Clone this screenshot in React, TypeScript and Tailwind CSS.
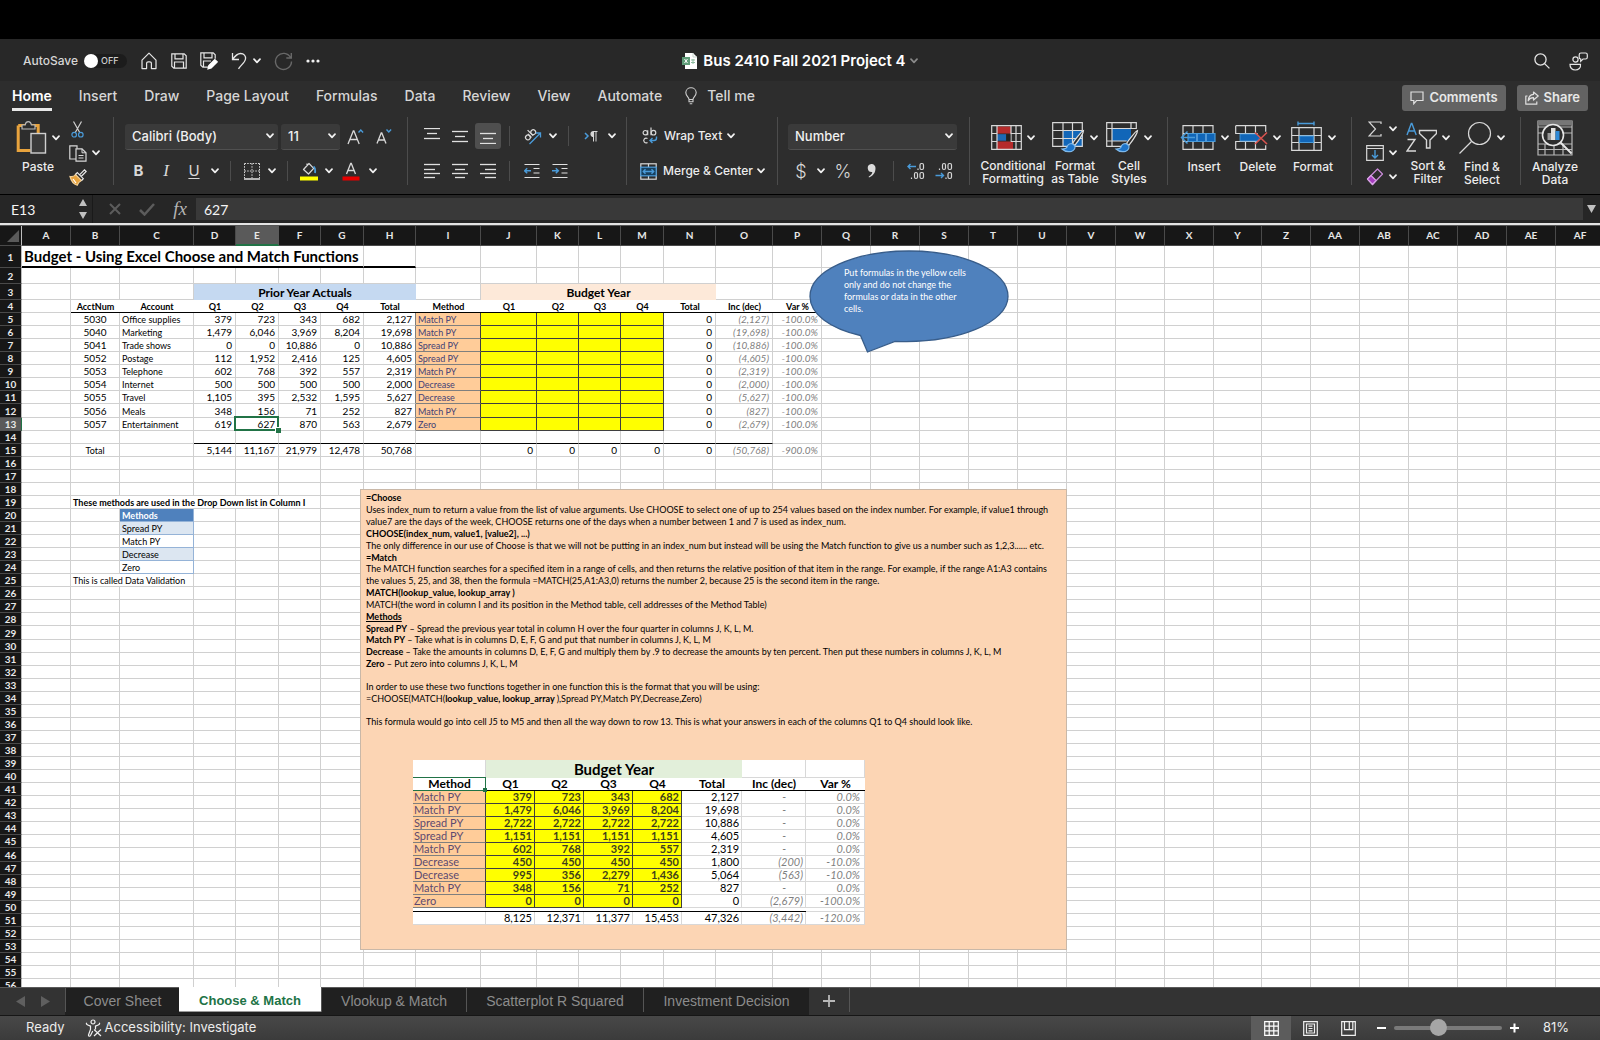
import React from "react";
import clsx from "clsx";

/* ------------------------------------------------------------------ */
/* Icons                                                                */
/* ------------------------------------------------------------------ */

type SvgProps = { w: number; h: number; children: React.ReactNode; className?: string };
const Svg = ({ w, h, children, className }: SvgProps) => (
  <svg width={w} height={h} viewBox={`0 0 ${w} ${h}`} fill="none" stroke="#d8d8d8" strokeWidth="1.2" className={clsx("shrink-0", className)} aria-hidden="true">
    {children}
  </svg>
);

const Chevron = ({ dim }: { dim?: boolean }) => (
  <Svg w={8} h={6}>
    <path d="M1 1.2 4 4.4 7 1.2" stroke={dim ? "#8a8a8a" : "#f2f2f2"} strokeWidth="1.7" strokeLinecap="round" strokeLinejoin="round" />
  </Svg>
);

const HomeIcon = () => (
  <Svg w={18} h={18}>
    <path d="M2 8.2 9 1.2l7 7V16.6h-4.6v-5.2a1.6 1.6 0 0 0-1.6-1.6H8.200a1.600 1.600 0 0 0-1.600 1.600v5.200H2Z" stroke="#e6e6e6" strokeLinejoin="round" />
  </Svg>
);
const SaveIcon = () => (
  <Svg w={16} h={16}>
    <path d="M.8.8h12.400l2 2v12.400H2.800l-2-2ZM4 .8v5h8v-5M3.500 15.200V9h9v6.200" stroke="#e6e6e6" />
  </Svg>
);
const SaveAsIcon = () => (
  <Svg w={18} h={18}>
    <path d="M8 15.200H2.800l-2-2V.8h12.400l2 2v4M4 .8v5h8v-5M3.500 15.200V9H11" stroke="#e6e6e6" />
    <path d="m8 16.800.8-3.300 6-6 2.400 2.400-6 6Z" fill="#fff" stroke="#fff" />
  </Svg>
);
const UndoIcon = () => (
  <Svg w={16} h={18}>
    <path d="M1.500 1v6.500H8M1.500 7.500C4 4 6.500 1.500 9.500 1.500c3.500 0 5.500 2.500 5 5.500-.5 3.500-4.500 6-7 9.800" stroke="#e6e6e6" strokeWidth="1.300" />
  </Svg>
);
const RedoIcon = () => (
  <Svg w={19} h={19}>
    <path d="M16.500 5.500A8 8 0 1 0 17.500 9.500M17.300 1v5h-5" stroke="#686868" strokeWidth="1.400" />
  </Svg>
);
const DotsIcon = () => (
  <Svg w={14} h={4}>
    <g fill="#f0f0f0" stroke="none">
      <circle cx="2" cy="2" r="1.600" />
      <circle cx="7" cy="2" r="1.600" />
      <circle cx="12" cy="2" r="1.600" />
    </g>
  </Svg>
);
const FileIcon = () => (
  <Svg w={15} h={16}>
    <path d="M3 0h8l4 4v12H3Z" fill="#fff" stroke="none" />
    <path d="M11 0v4h4" stroke="#c9d8cf" strokeWidth="1" />
    <path d="M9 7h4M9 9.500h4M11 6v5" stroke="#8dbb9f" strokeWidth="1" />
    <rect x="0" y="4" width="8" height="8" fill="#5f9c78" stroke="none" />
    <path d="m2.500 6 3 4M5.500 6l-3 4" stroke="#fff" strokeWidth="1" />
  </Svg>
);
const SearchIcon = () => (
  <Svg w={16} h={16}>
    <circle cx="6.500" cy="6.500" r="5.600" stroke="#e6e6e6" strokeWidth="1.300" />
    <path d="m10.600 10.600 4.800 4.800" stroke="#e6e6e6" strokeWidth="1.300" />
  </Svg>
);
const PresenceIcon = () => (
  <Svg w={19} h={19}>
    <circle cx="6.500" cy="7.500" r="2.600" stroke="#e6e6e6" />
    <path d="M1 12.300h10.500c.5 3.500-2 5.700-5.200 5.700S.8 15.800 1 12.300Z" stroke="#e6e6e6" />
    <path d="M12 1h4.500a1.800 1.800 0 0 1 1.800 1.800v2.400A1.800 1.800 0 0 1 16.500 7H14l-2.300 2.300V7a1.800 1.800 0 0 1-1.500-1.800V2.800A1.800 1.800 0 0 1 12 1Z" stroke="#e6e6e6" />
  </Svg>
);
const BulbIcon = () => (
  <Svg w={12} h={18}>
    <path d="M4 12.500c0-2.200-3.200-3.300-3.200-7A5.100 5.100 0 0 1 6 .8a5.100 5.100 0 0 1 5.200 4.700c0 3.700-3.200 4.800-3.200 7ZM4 12.500v2.200h4v-2.200M4.700 16.800h2.600" stroke="#cfcfcf" strokeWidth="1.100" />
  </Svg>
);
const CommentIcon = () => (
  <Svg w={14} h={14}>
    <path d="M1 1h12v8.500H6.500L3.800 12.700V9.500H1Z" stroke="#e0e0e0" />
  </Svg>
);
const ShareIcon = () => (
  <Svg w={14} h={14}>
    <path d="M2.500 5H.8v8.200h11V10.500M8.500 1l4.700 4-4.700 4V6.700C6 6.600 4.500 7.500 3.200 9.800 3.400 6 5 3.700 8.500 3.400Z" stroke="#e0e0e0" strokeLinejoin="round" />
  </Svg>
);
const PasteIcon = () => (
  <Svg w={31} h={34}>
    <path d="M2.200 4.500h20v9.500M14.500 29.500H2.200V4.500" stroke="#e8a33d" strokeWidth="3" />
    <path d="M6 8V4h3.200c.5-4.400 5.600-4.400 6.200 0H19v4Z" fill="#2d2d2d" stroke="#b9b9b9" />
    <rect x="15" y="12.500" width="14.500" height="19.500" fill="#3a3a3a" stroke="#cfcfcf" strokeWidth="1.400" />
  </Svg>
);
const CutIcon = () => (
  <Svg w={13} h={17}>
    <path d="M2.500.5 9 12M10.500.5 4 12" stroke="#d0d0d0" />
    <circle cx="3.200" cy="13.700" r="2.300" stroke="#4a9bd9" />
    <circle cx="9.800" cy="13.700" r="2.300" stroke="#4a9bd9" />
  </Svg>
);
const CopyIcon = () => (
  <Svg w={18} h={17}>
    <path d="M7 14H.8V.8H8v3" />
    <path d="M7 3.800h6l4 4v8.400H7Z" fill="#2d2d2d" />
    <path d="M13 3.800v4h4M9.500 10.500h5M9.500 13h5" strokeWidth="1" />
  </Svg>
);
const BrushIcon = () => (
  <Svg w={18} h={17}>
    <path d="M1 7.500c3 .5 4.500-.5 5.500-2l6 6c-2 1-3.500 2.500-4.300 4.700C4.500 15 2 11.500 1 7.500Z" fill="#e8a33d" stroke="#f2cf96" />
    <path d="m6.500 5.500 1.800-1.800 6 6-1.800 1.800M10.500 5.800l5-5 1.700 1.700-5 5" stroke="#e8e8e8" />
    <path d="m4 10 3 4" stroke="#fff" />
  </Svg>
);
const GrowFont = () => (
  <Svg w={17} h={17}>
    <path d="M1 16 6.300 3h.6L12.200 16M3 11.500h7.200" strokeWidth="1.300" />
    <path d="m11.500 4.500 2.300-2.500 2.300 2.500" stroke="#4a9bd9" strokeWidth="1.400" />
  </Svg>
);
const ShrinkFont = () => (
  <Svg w={17} h={17}>
    <path d="M1 15.500 5.200 5h.6L10 15.500M2.700 12h5.600" strokeWidth="1.300" />
    <path d="m10.500 1.500 2.300 2.500 2.300-2.500" stroke="#4a9bd9" strokeWidth="1.400" />
  </Svg>
);
const BordersIcon = () => (
  <Svg w={16} h={17}>
    <path d="M.5.500h15M.5 8h15M.5.500V15M8 .5V15M15.500.500V15" strokeDasharray="1.500 1.200" strokeWidth="1" />
    <path d="M0 16h16" strokeWidth="1.600" />
  </Svg>
);
const FillIcon = () => (
  <Svg w={18} h={19}>
    <path d="M9 1.500 3.500 7.500l5 4.500 5.200-5.700ZM7 4V1.500" strokeLinejoin="round" />
    <path d="M13.500 4.500c1.500 1 2 3 1.500 6.500" stroke="#4a9bd9" strokeWidth="1.800" />
    <path d="M0 16.500h18" stroke="#ffff00" strokeWidth="4" />
  </Svg>
);
const FontColorIcon = () => (
  <Svg w={18} h={19}>
    <path d="M4.500 12 8.700 1.500h.6L13.500 12M6.200 8.500h5.600" strokeWidth="1.300" />
    <path d="M.500 16.500h17" stroke="#e60000" strokeWidth="4" />
  </Svg>
);

const Lines = ({ rows }: { rows: [number, number, number][] }) => (
  <Svg w={16} h={16}>
    {rows.map(([y, x1, x2]) => (
      <path key={y} d={`M${x1} ${y}.5H${x2}`} stroke="#e0e0e0" strokeWidth="1.300" />
    ))}
  </Svg>
);
const OrientIcon = () => (
  <Svg w={19} h={17}>
    <g transform="rotate(-45 6 7)">
      <circle cx="3.500" cy="8" r="2.400" />
      <path d="M6 5.500v5M8.500 2.500v8" />
      <circle cx="11" cy="8" r="2.400" />
    </g>
    <path d="m6.500 16 11-11M13 5h4.500v4.500" stroke="#4a9bd9" strokeWidth="1.300" />
  </Svg>
);
const ParaIcon = () => (
  <Svg w={14} h={12}>
    <path d="m1 3 3 3-3 3" stroke="#4a9bd9" strokeWidth="1.500" />
    <path d="M9.500 11.500V1.500M12 11.500V1.500M13.500 1.500H9" strokeWidth="1" />
    <path d="M9.500 1.500a2.500 2.500 0 0 0 0 5Z" fill="#d8d8d8" />
  </Svg>
);
const IndentIcon = ({ right }: { right?: boolean }) => (
  <Svg w={16} h={16}>
    <path d="M.500 1.500H15.500M9.500 5.500h6M9.500 10h6M.500 14.500H15.500" stroke="#e0e0e0" />
    {right ? <path d="M0 7.800h6M3.800 5.300l2.500 2.500-2.500 2.500" stroke="#4a9bd9" strokeWidth="1.500" /> : <path d="M7 7.800H1M3.200 5.300.7 7.800l2.500 2.500" stroke="#4a9bd9" strokeWidth="1.500" />}
  </Svg>
);
const WrapIcon = () => (
  <Svg w={16} h={18}>
    <circle cx="3.300" cy="5.700" r="2.200" />
    <path d="M5.700 3.200v5M9 .500v7.700M5.500 11.500a2.400 2.400 0 1 0 0 4" />
    <circle cx="11.500" cy="5.700" r="2.300" />
    <path d="M14.500 9.500v1.500a2.500 2.500 0 0 1-2.500 2.500H8M10.500 11 8 13.500l2.500 2.500" stroke="#4a9bd9" strokeWidth="1.400" />
  </Svg>
);
const MergeIcon = () => (
  <Svg w={17} h={17}>
    <rect x=".8" y=".8" width="15.400" height="15.400" />
    <path d="M8.500.800v3.500M8.500 12.700v3.500" />
    <rect x=".8" y="4.200" width="15.400" height="8.600" fill="#17405f" stroke="#4a9bd9" />
    <path d="M3.500 8.500h10M5.500 6.300 3.300 8.500l2.200 2.200M11.500 6.300l2.200 2.200-2.200 2.200" stroke="#4a9bd9" strokeWidth="1.400" />
  </Svg>
);
const CommaIcon = () => (
  <Svg w={9} h={14}>
    <path d="M4.300 0a4 4 0 0 1 4.200 4.200c0 4.300-2.300 7.600-6.500 9.300l-.4-.8C4 11.300 5.200 9.700 5.300 8A4 4 0 1 1 4.300 0Z" fill="#dcdcdc" stroke="none" />
  </Svg>
);
const Decimals = ({ less }: { less?: boolean }) => (
  <Svg w={18} h={18}>
    {less ? (
      <>
        <rect x="7.500" y="1.500" width="3" height="6" rx="1.500" />
        <rect x="13" y="1.500" width="3.500" height="6" rx="1.500" />
        <path d="M4.500 6.500v1.500M11 15.500V17" />
        <rect x="13" y="10.500" width="3.500" height="6" rx="1.500" />
        <path d="M.500 13.500h8M6 11l2.500 2.500L6 16" stroke="#4a9bd9" strokeWidth="1.400" />
      </>
    ) : (
      <>
        <rect x="13" y="1.500" width="3.500" height="6" rx="1.500" />
        <path d="M11 6.500v1.500M4.500 15.500V17" />
        <rect x="7.500" y="10.500" width="3" height="6" rx="1.500" />
        <rect x="13" y="10.500" width="3.500" height="6" rx="1.500" />
        <path d="M9 4.500H1M3.500 2 1 4.500 3.500 7" stroke="#4a9bd9" strokeWidth="1.400" />
      </>
    )}
  </Svg>
);

const CondIcon = () => (
  <Svg w={31} h={26}>
    <path d="M6 1.500h14v7H6ZM6 16.500h16v7.500H6Z" fill="#b52b2b" stroke="none" />
    <path d="M6 9.200h9v6.500H6Z" fill="#1d69b4" stroke="none" />
    <path d="M.7.700h29.600v23.600H.7ZM.7 8.500H6M20 8.500h10.300M.7 16.500H6M20 16.500h10.300M6 .700v23.600M20 .700v15.800M25 .700v23.600" />
    <path d="M15.500 9.200h4v6.500h-4Z" fill="#222" stroke="none" />
  </Svg>
);
const PaintBrush = () => (
  <>
    <path d="M31.500 8.500c-1.500.3-9 9.500-11 13l2.300 1.800C25.500 20 31.500 11.500 31.500 8.500Z" fill="#2d2d2d" stroke="#e0e0e0" />
    <path d="M20 21.500c-3 0-4.500 1.500-5 3.500-.5 1.300-2 2-5 2 2.500 2.500 6 3 9.500 2.300 2.800-.8 4-3.300 3.200-5.800Z" fill="#1d74c9" stroke="#7db8ea" />
  </>
);
const TableIcon = () => (
  <Svg w={33} h={31}>
    <path d="M11 8.500h20v16H11Z" fill="#1166b8" stroke="none" />
    <path d="M.7.700h29.600v23.600H.7ZM.7 8.500h29.600M.7 16.500h29.600M11 .700v23.600M20.500 .700v23.600" />
    <PaintBrush />
  </Svg>
);
const StylesIcon = () => (
  <Svg w={33} h={31}>
    <path d="M6 6.500h19v12.500H6Z" fill="#1166b8" stroke="none" />
    <path d="M.7.700h29.600v5.800H.7ZM.7 6.500v17.800h20M6 .700v23.600M.7 19h20M25 .700v5.800" />
    <PaintBrush />
  </Svg>
);
const InsertIcon = () => (
  <Svg w={36} h={26}>
    <path d="M3 .700h30v23.600H3ZM3 8.500h30M3 16.500h30M13 .700v23.600M23 .700v23.600" />
    <path d="M8 8.500h27v8H8Z" fill="#1166b8" stroke="#4a9bd9" />
    <path d="M15 12.500H1.500M7.500 6.500l-6 6 6 6" stroke="#4a9bd9" strokeWidth="1.500" />
    <path d="M17 9v7M26 9v7" stroke="#7db8ea" />
  </Svg>
);
const DeleteIcon = () => (
  <Svg w={33} h={26}>
    <path d="M.7.700h30v6M.7.700v7.800h22M.7 24.300V16.500h22M.7 24.300h30v-4M10.500.700v7.800M20.500.700v7.800M10.500 16.500v7.800M20.500 16.500v7.800" />
    <path d="M5 9h17l3 3.500-3 3.500H5Z" fill="#1166b8" stroke="#4a9bd9" strokeWidth=".8" />
    <path d="m20 7.500 12 11.500M32 7.500 20 19" stroke="#d9534f" strokeWidth="1.600" />
  </Svg>
);
const FormatIcon = () => (
  <Svg w={32} h={36}>
    <path d="M7 3.500h16M7 1.500v4M23 1.500v4" stroke="#4a9bd9" strokeWidth="1.400" />
    <path d="M.7 7.700h29.600v22.600H.7ZM.7 15.500h29.600M.7 22.500h29.600M8 7.700v22.600M23 7.700v22.600" />
    <path d="M8.500 16h14v6.500h-14Z" fill="#1166b8" stroke="#4a9bd9" />
  </Svg>
);
const SigmaIcon = () => (
  <Svg w={14} h={16}>
    <path d="M13 3V1H1l6.500 7L1 15h12v-2" />
  </Svg>
);
const FillDownIcon = () => (
  <Svg w={18} h={16}>
    <path d="M.7.700h16.600v14.600H.7ZM.7 3.500h16.600" />
    <path d="M9 5v8M6 10l3 3 3-3" stroke="#4a9bd9" strokeWidth="1.400" />
  </Svg>
);
const EraserIcon = () => (
  <Svg w={18} h={18}>
    <path d="M1.500 11 11.500 1l5 5-10 10.500Z" stroke="#c98bd9" strokeLinejoin="round" />
    <path d="m1.500 11 3.500-3.500 5 5-3.500 4Z" fill="#a63cc0" stroke="#d9a5e5" strokeLinejoin="round" />
  </Svg>
);
const SortIcon = () => (
  <Svg w={31} h={32}>
    <path d="M1 13 5.300 1.500h.6L10.200 13M2.500 9h6.500" stroke="#4a9bd9" strokeWidth="1.400" />
    <path d="M1.500 17.500H9L1 29h9" strokeWidth="1.400" />
    <path d="M13.500 8.500h17v3L24 18v8h-3.500v-8l-7-6.500Z" strokeWidth="1.400" />
  </Svg>
);
const FindIcon = () => (
  <Svg w={33} h={34}>
    <circle cx="20.500" cy="12.500" r="11" />
    <path d="m12.500 20.500-12 12" />
  </Svg>
);
const AnalyzeIcon = () => (
  <Svg w={36} h={36}>
    <path d="M1 1h34v34H1ZM1 7h34M1 13h34M1 24h34M1 29.500h34M8 24v11M17 24v11M26 24v11" stroke="#b8b8b8" />
    <rect x="1" y="1" width="34" height="4.500" fill="#777" stroke="none" />
    <circle cx="16" cy="15" r="10.500" fill="#2d2d2d" stroke="#e6e6e6" strokeWidth="1.600" />
    <path d="m23.500 22.500 11 11" stroke="#e6e6e6" strokeWidth="2" />
    <path d="M10.500 13h4v7h-4Z" fill="#999" stroke="none" />
    <path d="M14 8h4.500v12H14Z" fill="#e0e0e0" stroke="none" />
    <path d="M18.500 11h4v9h-4Z" fill="#2f8ad8" stroke="none" />
  </Svg>
);
const AccessIcon = () => (
  <Svg w={17} h={18}>
    <circle cx="8" cy="3" r="2" stroke="#f0f0f0" />
    <path d="M1.500 4.200c-.8 1.500 2.500 2.300 4 2.800v3.500L3.500 16c-.2 1.200 1.300 1.700 2 .5l2-4M14.500 4.200c.8 1.500-2.500 2.300-4 2.800v3" stroke="#f0f0f0" strokeLinecap="round" />
    <path d="m9 10.500 7 6.500M16 10.500 9 17" stroke="#f0f0f0" />
  </Svg>
);

/* ------------------------------------------------------------------ */
/* Ribbon                                                               */
/* ------------------------------------------------------------------ */

const IconBtn = ({ label, className, children }: { label: string; className?: string; children: React.ReactNode }) => (
  <button type="button" aria-label={label} className={clsx("flex h-[26px] shrink-0 items-center justify-center", className)}>
    {children}
  </button>
);
const Drop = ({ label }: { label: string }) => (
  <IconBtn label={label} className="w-[14px]">
    <Chevron />
  </IconBtn>
);
const Sep = () => <span className="mx-2 h-5 w-px shrink-0 bg-[#4c4c4c]" />;

const Group = ({ className, children }: { className?: string; children: React.ReactNode }) => (
  <div className={clsx("h-[68px] shrink-0 border-r border-[#4c4c4c]", className)}>{children}</div>
);

const BigBtn = ({ icon, lines, className, noDrop }: { icon: React.ReactNode; lines: string[]; className?: string; noDrop?: boolean }) => (
  <button type="button" className={clsx("flex shrink-0 flex-col items-center pt-1 text-[12px] leading-[13px] font-medium text-[#ececec]", className)}>
    <span className="flex h-[34px] items-center gap-[5px]">
      {icon}
      {!noDrop && <Chevron />}
    </span>
    <span className="mt-[5px] whitespace-nowrap">
      {lines.map((l) => (
        <span key={l} className="block">
          {l}
        </span>
      ))}
    </span>
  </button>
);

const Select = ({ label, value, className }: { label: string; value: string; className?: string }) => (
  <div className={clsx("relative h-[26px] shrink-0", className)}>
    <select aria-label={label} defaultValue={value} className="h-full w-full appearance-none rounded-[3px] border-b border-[#505050] bg-[#3a3a3a] pl-[7px] text-[13px] font-medium text-[#f0f0f0]">
      <option>{value}</option>
    </select>
    <span className="pointer-events-none absolute inset-y-0 right-1 flex items-center">
      <Chevron />
    </span>
  </div>
);

const tabs = ["Home", "Insert", "Draw", "Page Layout", "Formulas", "Data", "Review", "View", "Automate"];

function TitleBar() {
  return (
    <header className="grid h-[42px] shrink-0 grid-cols-[1fr_auto_1fr] items-center bg-[#282828] pt-[2px]">
      <div className="flex items-center pl-[23px]">
        <label htmlFor="autosave" className="text-[12px] font-medium text-[#d6d6d6]">
          AutoSave
        </label>
        <span className="relative ml-[6px] flex h-[14px] w-[43px] items-center rounded-full bg-[#1c1c1c]">
          <input id="autosave" type="checkbox" className="h-[14px] w-[14px] appearance-none rounded-full bg-white" />
          <span className="ml-[3px] text-[9px] font-medium text-[#d0d0d0]">OFF</span>
        </span>
        <div className="ml-[13px] flex items-center gap-[13px]">
          <button type="button" aria-label="Home"><HomeIcon /></button>
          <button type="button" aria-label="Save"><SaveIcon /></button>
          <button type="button" aria-label="Save as"><SaveAsIcon /></button>
          <button type="button" aria-label="Undo" className="flex items-center gap-[6px]"><UndoIcon /><Chevron /></button>
          <button type="button" aria-label="Redo"><RedoIcon /></button>
          <button type="button" aria-label="More"><DotsIcon /></button>
        </div>
      </div>
      <button type="button" className="flex items-center text-[15px] font-semibold text-white">
        <FileIcon />
        <span className="mr-1 ml-[6px]">Bus 2410 Fall 2021 Project 4</span>
        <Chevron dim />
      </button>
      <div className="flex items-center justify-end gap-[19px] pr-3">
        <button type="button" aria-label="Search"><SearchIcon /></button>
        <button type="button" aria-label="Presence"><PresenceIcon /></button>
      </div>
    </header>
  );
}

function TabBar() {
  return (
    <nav className="flex h-[30px] shrink-0 items-start bg-[#2d2d2d] pr-3 pl-3">
      <div className="flex gap-[27px] pt-[5px] text-[14px] leading-5 font-medium text-[#d6d6d6]">
        {tabs.map((t) => (
          <button key={t} type="button" className={clsx("h-[25px] whitespace-nowrap", t === "Home" ? "border-b-3 border-[#e8e8e8] pb-[2px] font-semibold text-white" : "pb-[5px]")}>
            {t}
          </button>
        ))}
        <button type="button" className="flex h-5 items-center gap-[10px] -ml-1 whitespace-nowrap">
          <BulbIcon />
          Tell me
        </button>
      </div>
      <div className="ml-auto flex gap-[11px] pt-1 text-[13px] font-semibold text-[#e8e8e8]">
        <button type="button" className="flex h-[26px] items-center gap-[5px] rounded-[3px] bg-[#636363] px-2">
          <CommentIcon />
          Comments
        </button>
        <button type="button" className="flex h-[26px] items-center gap-[5px] rounded-[3px] bg-[#636363] px-2">
          <ShareIcon />
          Share
        </button>
      </div>
    </nav>
  );
}

function Ribbon() {
  return (
    <div className="flex h-[84px] shrink-0 overflow-hidden border-b border-black bg-[#2d2d2d] pt-[6px] font-medium">
      <Group className="flex w-[114px] pl-[15px]">
        <BigBtn icon={<PasteIcon />} lines={["Paste"]} className="w-[46px]" />
        <div className="ml-2 flex flex-col items-start gap-[2px] pt-[1px]">
          <IconBtn label="Cut" className="ml-[2px] h-[22px]!"><CutIcon /></IconBtn>
          <IconBtn label="Copy" className="h-[22px]! gap-[5px]"><CopyIcon /><Chevron /></IconBtn>
          <IconBtn label="Format painter" className="h-[22px]!"><BrushIcon /></IconBtn>
        </div>
      </Group>

      <Group className="w-[294px] pt-[6px] pl-[11px]">
        <div className="flex">
          <Select label="Font" value="Calibri (Body)" className="w-[153px]" />
          <Select label="Font size" value="11" className="ml-[3px] w-[59px]" />
          <IconBtn label="Increase font size" className="ml-[2px] w-[27px]"><GrowFont /></IconBtn>
          <IconBtn label="Decrease font size" className="w-[30px]"><ShrinkFont /></IconBtn>
        </div>
        <div className="mt-[9px] flex items-center text-[15px] text-[#d8d8d8]">
          <IconBtn label="Bold" className="w-[27px] font-bold">B</IconBtn>
          <IconBtn label="Italic" className="w-[28px] font-['Liberation_Serif'] text-[17px] italic">I</IconBtn>
          <IconBtn label="Underline" className="w-[28px] font-normal underline underline-offset-2">U</IconBtn>
          <Drop label="Underline options" />
          <Sep />
          <IconBtn label="Borders" className="w-[26px]"><BordersIcon /></IconBtn>
          <Drop label="Border options" />
          <Sep />
          <IconBtn label="Fill color" className="w-[26px]"><FillIcon /></IconBtn>
          <Drop label="Fill color options" />
          <IconBtn label="Font color" className="w-[30px]"><FontColorIcon /></IconBtn>
          <Drop label="Font color options" />
        </div>
      </Group>

      <Group className="w-[219px] pt-[6px] pl-[11px]">
        <div className="flex items-center">
          <IconBtn label="Align top" className="w-[26px]"><Lines rows={[[0, 0, 16], [5, 3, 13], [10, 0, 16]]} /></IconBtn>
          <IconBtn label="Align middle" className="ml-[2px] w-[26px]"><Lines rows={[[3, 0, 16], [8, 3, 13], [13, 0, 16]]} /></IconBtn>
          <IconBtn label="Align bottom" className="ml-[2px] w-[26px] rounded-[3px] bg-[#4f4f4f]"><Lines rows={[[5, 0, 16], [10, 3, 13], [15, 0, 16]]} /></IconBtn>
          <Sep />
          <IconBtn label="Orientation" className="w-[28px]"><OrientIcon /></IconBtn>
          <Drop label="Orientation options" />
          <Sep />
          <IconBtn label="Text direction" className="w-[28px]"><ParaIcon /></IconBtn>
          <Drop label="Text direction options" />
        </div>
        <div className="mt-[9px] flex items-center">
          <IconBtn label="Align left" className="w-[26px]"><Lines rows={[[1, 0, 16], [6, 0, 11], [10, 0, 16], [14, 0, 11]]} /></IconBtn>
          <IconBtn label="Align center" className="ml-[2px] w-[26px]"><Lines rows={[[1, 0, 16], [6, 3, 13], [10, 0, 16], [14, 3, 13]]} /></IconBtn>
          <IconBtn label="Align right" className="ml-[2px] w-[26px]"><Lines rows={[[1, 0, 16], [6, 5, 16], [10, 0, 16], [14, 5, 16]]} /></IconBtn>
          <Sep />
          <IconBtn label="Decrease indent" className="w-[28px]"><IndentIcon /></IconBtn>
          <IconBtn label="Increase indent" className="w-[28px]"><IndentIcon right /></IconBtn>
        </div>
      </Group>

      <Group className="w-[151px] pt-[6px] pl-[13px] text-[12px] text-[#ececec]">
        <button type="button" className="flex h-[26px] items-center pl-[2px] whitespace-nowrap">
          <WrapIcon />
          <span className="mr-[5px] ml-[6px]">Wrap Text</span>
          <Chevron />
        </button>
        <button type="button" className="mt-[9px] flex h-[26px] items-center whitespace-nowrap">
          <MergeIcon />
          <span className="mr-1 ml-[6px]">Merge &amp; Center</span>
          <Chevron />
        </button>
      </Group>

      <Group className="w-[192px] pt-[6px] pl-[10px]">
        <Select label="Number format" value="Number" className="w-[169px]" />
        <div className="mt-[9px] flex items-center text-[#d8d8d8]">
          <IconBtn label="Currency" className="w-[26px] text-[18px] font-light">$</IconBtn>
          <Drop label="Currency options" />
          <IconBtn label="Percent" className="w-[30px] text-[18px] font-light">%</IconBtn>
          <IconBtn label="Comma style" className="w-[27px]"><CommaIcon /></IconBtn>
          <Sep />
          <IconBtn label="Increase decimal" className="w-[27px]"><Decimals /></IconBtn>
          <IconBtn label="Decrease decimal" className="w-[29px]"><Decimals less /></IconBtn>
        </div>
      </Group>

      <Group className="flex w-[198px] pl-[10px]">
        <BigBtn icon={<CondIcon />} lines={["Conditional", "Formatting"]} className="w-[66px]" />
        <BigBtn icon={<TableIcon />} lines={["Format", "as Table"]} className="w-[58px]" />
        <BigBtn icon={<StylesIcon />} lines={["Cell", "Styles"]} className="w-[50px]" />
      </Group>

      <Group className="flex w-[184px] pl-[9px]">
        <BigBtn icon={<InsertIcon />} lines={["Insert"]} className="w-[54px]" />
        <BigBtn icon={<DeleteIcon />} lines={["Delete"]} className="w-[54px]" />
        <BigBtn icon={<FormatIcon />} lines={["Format"]} className="w-[56px]" />
      </Group>

      <Group className="flex w-[169px] pl-[14px]">
        <div className="flex flex-col gap-[2px] pt-[1px]">
          <IconBtn label="AutoSum" className="h-[22px]! justify-start! gap-[7px] pl-[2px]"><SigmaIcon /><Chevron /></IconBtn>
          <IconBtn label="Fill" className="h-[22px]! justify-start! gap-[5px]"><FillDownIcon /><Chevron /></IconBtn>
          <IconBtn label="Clear" className="h-[22px]! justify-start! gap-[5px]"><EraserIcon /><Chevron /></IconBtn>
        </div>
        <BigBtn icon={<SortIcon />} lines={["Sort &", "Filter"]} className="ml-1 w-[54px]" />
        <BigBtn icon={<FindIcon />} lines={["Find &", "Select"]} className="w-[54px]" />
      </Group>

      <div className="flex flex-1 pl-[7px]">
        <BigBtn icon={<AnalyzeIcon />} lines={["Analyze", "Data"]} className="w-[54px]" noDrop />
      </div>
    </div>
  );
}

function FormulaBar() {
  return (
    <div className="flex h-[28px] shrink-0 items-center bg-[#262626] font-['Lato',sans-serif] text-[14px] text-[#f4f4f4]">
      <input aria-label="Name box" defaultValue="E13" className="w-[68px] bg-transparent pl-[11px] outline-none" />
      <Svg w={10} h={22} className="ml-[10px]">
        <path d="M5 1 9 8H1ZM5 21 1 14h8Z" fill="#c0c0c0" stroke="none" />
      </Svg>
      <span className="ml-1 h-full w-px bg-[#1a1a1a]" />
      <button type="button" aria-label="Cancel" className="ml-4">
        <Svg w={12} h={12}><path d="m1 1 10 10M11 1 1 11" stroke="#5c5c5c" strokeWidth="2" /></Svg>
      </button>
      <button type="button" aria-label="Enter" className="ml-[18px]">
        <Svg w={16} h={13}><path d="m1 7 4.500 4.500L15 1" stroke="#5c5c5c" strokeWidth="2.500" /></Svg>
      </button>
      <button type="button" aria-label="Insert function" className="ml-4 w-[18px] font-['Liberation_Serif'] text-[19px] leading-5 text-[#b4b4b4] italic">fx</button>
      <input aria-label="Formula" defaultValue="627" className="ml-[7px] h-[22px] min-w-0 flex-1 bg-[#393939] pl-2 outline-none" />
      <button type="button" aria-label="Expand formula bar" className="mr-1 ml-1">
        <Svg w={9} h={8}><path d="M0 0h9L4.500 8Z" fill="#c0c0c0" stroke="none" /></Svg>
      </button>
    </div>
  );
}

/* ------------------------------------------------------------------ */
/* Worksheet                                                            */
/* ------------------------------------------------------------------ */

const columns: [string, number][] = [
  ["A", 49], ["B", 49], ["C", 74], ["D", 42], ["E", 43], ["F", 42], ["G", 43], ["H", 52], ["I", 65], ["J", 56],
  ["K", 42], ["L", 42], ["M", 43], ["N", 52], ["O", 57], ["P", 49], ["Q", 49], ["R", 49], ["S", 49], ["T", 49],
  ["U", 49], ["V", 49], ["W", 49], ["X", 49], ["Y", 48], ["Z", 49], ["AA", 49], ["AB", 49], ["AC", 49], ["AD", 49],
  ["AE", 49], ["AF", 49],
];

type Cell = { t?: string; c?: string; span?: number; active?: boolean };
type Row = Record<string, Cell>;
const sheet: Record<number, Row> = {};

const put = (row: number, col: string, cell: Cell) => {
  sheet[row] = sheet[row] || {};
  sheet[row][col] = cell;
};

const GRID = "border-r border-b border-[#d0d0d0]";
const NUM = "border-r border-b border-[#d0d0d0] pt-px pr-[3px] text-right";
const DELTA = "border-r border-b border-[#d0d0d0] pt-px pr-[3px] text-right italic text-[#7f7f7f]";
const LABEL = "border-r border-b border-[#d0d0d0] pt-px pl-[2px] text-[9px]";
const LISTED = "border-r border-b border-[#95b3d7] pt-px pl-[2px] text-[9px]";
const HEAD = "border-b border-black pt-px text-center text-[9px] font-bold";
const TOTAL_LINE = "border-r border-b border-r-[#d0d0d0] border-b-black";

put(1, "A", { t: "Budget - Using Excel Choose and Match Functions", span: 7, c: "border-b-2 border-r border-b-black border-r-[#d0d0d0] pl-[2px] text-[15px] leading-[18px] font-bold" });
put(1, "H", { c: "border-b-2 border-r border-b-black border-r-[#d0d0d0]" });
put(3, "D", { t: "Prior Year Actuals", span: 5, c: "bg-[#c5d9f1] text-center text-[12px] font-bold" });
put(3, "J", { t: "Budget Year", span: 5, c: "bg-[#fde9d9] text-center text-[12px] font-bold" });
(
  [["B", "AcctNum"], ["C", "Account"], ["D", "Q1"], ["E", "Q2"], ["F", "Q3"], ["G", "Q4"], ["H", "Total"], ["I", "Method"], ["J", "Q1"], ["K", "Q2"], ["L", "Q3"], ["M", "Q4"], ["N", "Total"], ["O", "Inc (dec)"], ["P", "Var %"]] as const
).forEach(([col, t]) => put(4, col, { t, c: HEAD }));

const accounts = [
  ["5030", "Office supplies", "379", "723", "343", "682", "2,127", "Match PY"],
  ["5040", "Marketing", "1,479", "6,046", "3,969", "8,204", "19,698", "Match PY"],
  ["5041", "Trade shows", "0", "0", "10,886", "0", "10,886", "Spread PY"],
  ["5052", "Postage", "112", "1,952", "2,416", "125", "4,605", "Spread PY"],
  ["5053", "Telephone", "602", "768", "392", "557", "2,319", "Match PY"],
  ["5054", "Internet", "500", "500", "500", "500", "2,000", "Decrease"],
  ["5055", "Travel", "1,105", "395", "2,532", "1,595", "5,627", "Decrease"],
  ["5056", "Meals", "348", "156", "71", "252", "827", "Match PY"],
  ["5057", "Entertainment", "619", "627", "870", "563", "2,679", "Zero"],
];
accounts.forEach((a, i) => {
  const r = i + 5;
  put(r, "B", { t: a[0], c: "border-r border-b border-[#d0d0d0] pt-px text-center" });
  put(r, "C", { t: a[1], c: LABEL });
  ["D", "E", "F", "G"].forEach((col, k) => put(r, col, { t: a[k + 2], c: NUM, active: r === 13 && col === "E" }));
  put(r, "H", { t: a[6], c: "border-r border-b border-r-[#7f7f7f] border-b-[#d0d0d0] pt-px pr-[3px] text-right" });
  put(r, "I", { t: a[7], c: "border-r border-b border-r-[#3f3f3f] border-b-[#7f7f7f] bg-[#ffcc99] pt-px pl-[2px] text-[9px] text-[#3f3f76]" });
  ["J", "K", "L", "M"].forEach((col) => put(r, col, { c: "border-r border-b border-[#3f3f3f] bg-[#ffff00]" }));
  put(r, "N", { t: "0", c: NUM });
  put(r, "O", { t: `(${a[6]})`, c: DELTA });
  put(r, "P", { t: "-100.0%", c: DELTA });
});
["D", "E", "F", "G", "H", "I", "J", "K", "L", "M", "N", "O"].forEach((col) => put(14, col, { c: TOTAL_LINE }));
put(15, "B", { t: "Total", c: "border-r border-b border-[#d0d0d0] pt-px text-center text-[9px]" });
(
  [["D", "5,144"], ["E", "11,167"], ["F", "21,979"], ["G", "12,478"], ["H", "50,768"], ["J", "0"], ["K", "0"], ["L", "0"], ["M", "0"], ["N", "0"]] as const
).forEach(([col, t]) => put(15, col, { t, c: NUM }));
put(15, "O", { t: "(50,768)", c: DELTA });
put(15, "P", { t: "-900.0%", c: DELTA });

put(19, "B", { t: "These methods are used in the Drop Down list in Column I", span: 5, c: "border-r border-b border-[#d0d0d0] pt-px pl-[2px] text-[9px] font-bold" });
put(20, "C", { t: "Methods", c: "border-r border-b border-[#95b3d7] bg-[#4f81bd] pt-px pl-[2px] text-[9px] font-bold text-white" });
put(21, "C", { t: "Spread PY", c: clsx(LISTED, "bg-[#dce6f1]") });
put(22, "C", { t: "Match PY", c: LISTED });
put(23, "C", { t: "Decrease", c: clsx(LISTED, "bg-[#dce6f1]") });
put(24, "C", { t: "Zero", c: LISTED });
put(25, "B", { t: "This is called Data Validation", span: 2, c: LABEL });

const rowHeight = (r: number) => {
  if (r === 1) return "h-[22px]";
  if (r === 2 || r === 3) return "h-4";
  if (r === 12 || r === 29 || r === 46) return "h-[14px]";
  return "h-[13px]";
};

function SheetRow({ r }: { r: number }) {
  const row = sheet[r] || {};
  const cells: React.ReactNode[] = [];
  for (let i = 0; i < columns.length; i++) {
    const key = columns[i][0];
    const cell = row[key];
    const span = cell?.span ?? 1;
    cells.push(
      <td key={key} colSpan={span} className={clsx("p-0 whitespace-nowrap", cell?.c ?? GRID, cell?.active && "relative")}>
        {cell?.t}
        {cell?.active && (
          <span className="absolute -top-[2px] -right-px -bottom-px -left-[2px] border-2 border-[#217346]">
            <span className="absolute -right-[4px] -bottom-[4px] h-[6px] w-[6px] border-t border-l border-white bg-[#217346]" />
          </span>
        )}
      </td>,
    );
    i += span - 1;
  }
  return (
    <tr className={rowHeight(r)}>
      <th scope="row" className={clsx("border-r border-b p-0 text-center text-[10px] leading-[12px] font-bold text-[#e8e8e8]", r === 13 ? "border-r-[#217346] border-b-[#555] bg-[#5a5a5a]" : "border-r-[#bdbdbd] border-b-[#4a4a4a] bg-[#171717]")}>
        {r}
      </th>
      {cells}
    </tr>
  );
}

const resultRows = [
  ["Match PY", "379", "723", "343", "682", "2,127", "-", "0.0%"],
  ["Match PY", "1,479", "6,046", "3,969", "8,204", "19,698", "-", "0.0%"],
  ["Spread PY", "2,722", "2,722", "2,722", "2,722", "10,886", "-", "0.0%"],
  ["Spread PY", "1,151", "1,151", "1,151", "1,151", "4,605", "-", "0.0%"],
  ["Match PY", "602", "768", "392", "557", "2,319", "-", "0.0%"],
  ["Decrease", "450", "450", "450", "450", "1,800", "(200)", "-10.0%"],
  ["Decrease", "995", "356", "2,279", "1,436", "5,064", "(563)", "-10.0%"],
  ["Match PY", "348", "156", "71", "252", "827", "-", "0.0%"],
  ["Zero", "0", "0", "0", "0", "0", "(2,679)", "-100.0%"],
];
const RG = "border-r border-b border-[#d8d8d8]";

function ResultTable() {
  return (
    <table className="mt-8 ml-[47px] w-[452px] table-fixed border-separate border-spacing-0 bg-white text-[11px] leading-[12px] text-black">
      <colgroup>
        {[73, 49, 49, 49, 49, 60, 64, 59].map((w, i) => (
          <col key={i} style={{ width: w }} />
        ))}
      </colgroup>
      <tbody>
        <tr className="h-[18px]">
          <td className={clsx("p-0", RG)} />
          <th colSpan={5} className="bg-[#e2efda] p-0 text-[15px]">Budget Year</th>
          <td className={clsx("p-0", RG)} />
          <td className={clsx("p-0", RG)} />
        </tr>
        <tr className="h-[13px] text-[12px]">
          <th className="relative border-b border-[#217346] p-0">
            Method
            <span className="absolute -top-px right-0 -bottom-px left-0 border-t border-r border-[#217346]" />
            <span className="absolute -right-px -bottom-[2px] h-1 w-1 bg-[#217346]" />
          </th>
          {["Q1", "Q2", "Q3", "Q4", "Total", "Inc (dec)", "Var %"].map((h) => (
            <th key={h} className="border-b border-black p-0 whitespace-nowrap">{h}</th>
          ))}
        </tr>
        {resultRows.map((row, i) => (
          <tr key={i} className="h-[13px]">
            <td className="border-r border-b border-r-[#3f3f3f] border-b-[#7f7f7f] bg-[#ffcc99] p-0 pl-px whitespace-nowrap text-[#5d4a70]">{row[0]}</td>
            {row.slice(1, 5).map((v, k) => (
              <td key={k} className="border-r border-b border-[#3f3f3f] bg-[#ffff00] p-0 pr-[2px] text-right font-bold text-[#3f3f1a]">{v}</td>
            ))}
            <td className={clsx("p-0 pr-[2px] text-right", RG)}>{row[5]}</td>
            <td className={clsx("p-0 text-right text-[#7f7f7f] italic", RG, row[6] === "-" ? "pr-[19px]" : "pr-[2px]")}>{row[6]}</td>
            <td className={clsx("p-0 pr-1 text-right text-[#7f7f7f] italic", RG)}>{row[7]}</td>
          </tr>
        ))}
        <tr className="h-1">
          <td colSpan={7} className="border-b border-black p-0" />
          <td className={clsx("p-0", RG)} />
        </tr>
        <tr className="h-[13px]">
          <td className={clsx("p-0", RG)} />
          {["8,125", "12,371", "11,377", "15,453", "47,326"].map((v) => (
            <td key={v} className={clsx("p-0 pr-[2px] text-right", RG)}>{v}</td>
          ))}
          <td className={clsx("p-0 pr-[2px] text-right text-[#7f7f7f] italic", RG)}>(3,442)</td>
          <td className={clsx("p-0 pr-1 text-right text-[#7f7f7f] italic", RG)}>-120.0%</td>
        </tr>
      </tbody>
    </table>
  );
}

function Instructions() {
  return (
    <section className="absolute top-[263px] left-[360px] h-[461px] w-[707px] border border-[#c9b8a8] bg-[#fcd5b4] pt-[2px] pl-[5px] text-[9px] leading-[12px] whitespace-nowrap text-black">
      <p className="font-bold">=Choose</p>
      <p>Uses index_num to return a value from the list of value arguments. Use CHOOSE to select one of up to 254 values based on the index number. For example, if value1 through</p>
      <p>value7 are the days of the week, CHOOSE returns one of the days when a number between 1 and 7 is used as index_num.</p>
      <p className="font-bold">CHOOSE(index_num, value1, [value2], ...)</p>
      <p>The only difference in our use of Choose is that we will not be putting in an index_num but instead will be using the Match function to give us a number such as 1,2,3...... etc.</p>
      <p className="leading-[11px] font-bold">=Match</p>
      <p>The MATCH function searches for a specified item in a range of cells, and then returns the relative position of that item in the range. For example, if the range A1:A3 contains</p>
      <p>the values 5, 25, and 38, then the formula =MATCH(25,A1:A3,0) returns the number 2, because 25 is the second item in the range.</p>
      <p className="font-bold">MATCH(lookup_value, lookup_array )</p>
      <p>MATCH(the word in column I and its position in the Method table, cell addresses of the Method Table)</p>
      <p className="font-bold underline">Methods</p>
      <p className="leading-[11px]"><b>Spread PY</b> – Spread the previous year total in column H over the four quarter in columns J, K, L, M.</p>
      <p><b>Match PY</b> – Take what is in columns D, E, F, G and put that number in columns J, K, L, M</p>
      <p><b>Decrease</b> – Take the amounts in columns D, E, F, G and multiply them by .9 to decrease the amounts by ten percent. Then put these numbers in columns J, K, L, M</p>
      <p><b>Zero</b> – Put zero into columns J, K, L, M</p>
      <p className="mt-[11px]">In order to use these two functions together in one function this is the format that you will be using:</p>
      <p>=CHOOSE(MATCH(<b>lookup_value, lookup_array </b>),Spread PY,Match PY,Decrease,Zero)</p>
      <p className="mt-[11px]">This formula would go into cell J5 to M5 and then all the way down to row 13. This is what your answers in each of the columns Q1 to Q4 should look like.</p>
      <ResultTable />
    </section>
  );
}

function Callout() {
  return (
    <div className="absolute top-[24px] left-[809px] h-[104px] w-[200px]">
      <svg width="200" height="104" viewBox="0 0 200 104" className="absolute inset-0" aria-hidden="true">
        <path d="M51.500 85.500 58.500 102 86 91.300C150 94 199 72 199 46.500 199 21 155 1 100 1S1 21 1 46.500C1 64 21 78.500 51.500 85.500Z" fill="#4f81bd" stroke="#385d8a" strokeWidth="1.300" />
      </svg>
      <p className="relative pt-[17px] pl-[35px] text-[9px] leading-[12px] whitespace-nowrap text-white">
        Put formulas in the yellow cells
        <br />
        only and do not change the
        <br />
        formulas or data in the other
        <br />
        cells.
      </p>
    </div>
  );
}

function Worksheet() {
  return (
    <main className="relative min-h-0 flex-1 overflow-hidden bg-white font-['Lato',sans-serif]">
      <table className="w-full min-w-[1605px] table-fixed border-separate border-spacing-0 text-[10px] leading-[11px] text-black">
        <colgroup>
          <col style={{ width: 22 }} />
          {columns.map(([name, w]) => (
            <col key={name} style={{ width: w }} />
          ))}
        </colgroup>
        <thead>
          <tr className="h-5">
            <th aria-label="Select all" className="border-r border-b border-r-[#bdbdbd] border-b-[#4a4a4a] bg-[#171717] p-0">
              <Svg w={12} h={12} className="ml-[7px]">
                <path d="M12 0v12H0Z" fill="#5a5a5a" stroke="none" />
              </Svg>
            </th>
            {columns.map(([name]) => (
              <th key={name} scope="col" className={clsx("border-r p-0 text-center text-[10px] font-bold text-[#e8e8e8]", name === "E" ? "border-r-[#5a5a5a] border-b-2 border-b-[#217346] bg-[#5a5a5a]" : "border-r-[#4a4a4a] border-b border-b-[#4a4a4a] bg-[#171717]")}>
                {name}
              </th>
            ))}
          </tr>
        </thead>
        <tbody>
          {Array.from({ length: 56 }, (_, i) => (
            <SheetRow key={i} r={i + 1} />
          ))}
        </tbody>
      </table>
      <Callout />
      <Instructions />
    </main>
  );
}

/* ------------------------------------------------------------------ */
/* Footer                                                               */
/* ------------------------------------------------------------------ */

const sheetTabs: [string, string][] = [
  ["Cover Sheet", "w-[114px]"],
  ["Choose & Match", "w-[142px]"],
  ["Vlookup & Match", "w-[145px]"],
  ["Scatterplot R Squared", "w-[177px]"],
  ["Investment Decision", "w-[166px]"],
];

function SheetTabs() {
  return (
    <div className="flex h-[29px] shrink-0 border-t border-b border-t-[#5a5a5a] border-b-[#161616] bg-[#333333] font-['Liberation_Sans',sans-serif] text-[14px]">
      <div className="flex w-[65px] items-center justify-center gap-4">
        <button type="button" aria-label="Previous sheet"><Svg w={9} h={11}><path d="M9 0v11L0 5.500Z" fill="#5f5f5f" stroke="none" /></Svg></button>
        <button type="button" aria-label="Next sheet"><Svg w={9} h={11}><path d="M0 0v11l9-5.500Z" fill="#5f5f5f" stroke="none" /></Svg></button>
      </div>
      {sheetTabs.map(([t, w]) => (
        <div key={t} className={clsx("bg-[#202020]", w)}>
          <button type="button" className={clsx("w-full leading-4 whitespace-nowrap", t === "Choose & Match" ? "-mt-px h-[25px] border-b border-[#9a9a9a] bg-white pt-[3px] text-[13px] font-bold text-[#217346]" : "h-6 border-l border-[#555] pt-[2px] text-[#8c8c8c]")}>
            {t}
          </button>
        </div>
      ))}
      <button type="button" aria-label="Add sheet" className="flex h-6 w-[41px] items-center justify-center border-r border-[#555] pt-[2px]">
        <Svg w={12} h={12}><path d="M6 0v12M0 6h12" stroke="#b8b8b8" strokeWidth="1.800" /></Svg>
      </button>
    </div>
  );
}

function StatusBar() {
  return (
    <footer className="flex h-6 shrink-0 items-center bg-linear-to-b from-[#484848] to-[#3b3b3b] text-[13px] text-[#ececec]">
      <span className="ml-[26px]">Ready</span>
      <button type="button" className="ml-5 flex items-center gap-[3px]">
        <AccessIcon />
        Accessibility: Investigate
      </button>
      <div className="ml-auto flex h-full items-center">
        <button type="button" aria-label="Normal view" className="flex h-full w-10 items-center justify-center bg-[#5c5c5c]">
          <Svg w={15} h={15}><path d="M.7.700h13.600v13.600H.7ZM5.200.700v13.600M9.800.700v13.600M.7 5.200h13.600M.7 9.800h13.600" stroke="#fff" strokeWidth="1.200" /></Svg>
        </button>
        <button type="button" aria-label="Page layout view" className="flex h-full w-[38px] items-center justify-center">
          <Svg w={15} h={15}><path d="M.7.700h13.600v13.600H.7ZM3.500 3h8v9h-8ZM5.500 5.200h4M5.500 7.500h4M5.500 9.800h4" stroke="#f0f0f0" /></Svg>
        </button>
        <button type="button" aria-label="Page break view" className="flex h-full w-[38px] items-center justify-center">
          <Svg w={15} h={15}><path d="M.7.700h13.600v13.600H.7ZM3.500.700v8h4.800v-8M8.300 8.700h3.500v-8" stroke="#f0f0f0" /></Svg>
        </button>
        <button type="button" aria-label="Zoom out" className="ml-[10px]"><Svg w={9} h={10}><path d="M0 5h9" stroke="#fff" strokeWidth="2" /></Svg></button>
        <input
          type="range"
          aria-label="Zoom"
          min={0}
          max={100}
          defaultValue={40}
          className="mx-2 h-[17px] w-[108px] appearance-none bg-transparent [&::-webkit-slider-runnable-track]:h-1 [&::-webkit-slider-runnable-track]:rounded-full [&::-webkit-slider-runnable-track]:bg-[#7a7a7a] [&::-webkit-slider-thumb]:-mt-[7px] [&::-webkit-slider-thumb]:h-[17px] [&::-webkit-slider-thumb]:w-[17px] [&::-webkit-slider-thumb]:appearance-none [&::-webkit-slider-thumb]:rounded-full [&::-webkit-slider-thumb]:bg-[#a6a6a6]"
        />
        <button type="button" aria-label="Zoom in"><Svg w={9} h={10}><path d="M0 5h9M4.500.500v9" stroke="#fff" strokeWidth="2" /></Svg></button>
        <span className="ml-6 w-[57px]">81%</span>
      </div>
    </footer>
  );
}

export default function App() {
  return (
    <div className="flex h-screen flex-col overflow-hidden bg-[#2d2d2d] font-['Inter',sans-serif]">
      <div className="h-[39px] shrink-0 bg-black" />
      <TitleBar />
      <TabBar />
      <Ribbon />
      <FormulaBar />
      <div className="h-[3px] shrink-0 border-b border-[#555] bg-[#e4e4e4]" />
      <Worksheet />
      <SheetTabs />
      <StatusBar />
    </div>
  );
}
